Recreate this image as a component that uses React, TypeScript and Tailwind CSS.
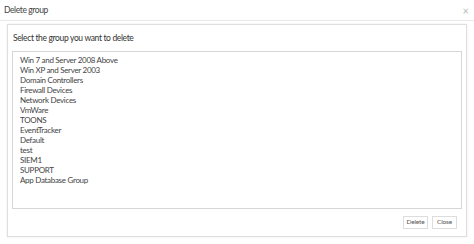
import React from "react";

const groups = [
  "Win 7 and Server 2008 Above",
  "Win XP and Server 2003",
  "Domain Controllers",
  "Firewall Devices",
  "Network Devices",
  "VmWare",
  "TOONS",
  "EventTracker",
  "Default",
  "test",
  "SIEM1",
  "SUPPORT",
  "App Database Group",
];

export default function App() {
  return (
    <div
      className="w-[474px] h-[244px] bg-white text-[#333] overflow-hidden"
      style={{ fontFamily: "Lato, 'Noto Sans', sans-serif" }}
    >
      {/* Header */}
      <div className="h-[21px] flex items-center justify-between pl-[4px] pr-[5px] border-b border-[#e8e8e8]">
        <span className="text-[8.5px] tracking-[-0.4px] leading-none text-[#444]">Delete group</span>
        <span className="text-[11px] leading-none text-[#bbb]">×</span>
      </div>

      {/* Panel */}
      <div className="mx-[7px] mt-[3px] h-[213px] border border-[#dedede] shadow-[0_0_2px_rgba(0,0,0,0.08)] flex flex-col px-[4px]">
        <div className="h-[26px] flex items-center pl-[1px] text-[8.5px] tracking-[-0.35px] text-[#333]">
          Select the group you want to delete
        </div>
        <div className="h-[158px] border border-[#d6d6d6] pl-[7px] pt-[3px] flex flex-col">
          {groups.map((g) => (
            <div key={g} className="h-[10px] text-[8px] tracking-[-0.3px] leading-[10px] text-[#444]">
              {g}
            </div>
          ))}
        </div>
        <div className="flex justify-end gap-[4px] pt-[7px] pr-[5px]">
          <button className="h-[13px] w-[25px] border border-[#ddd] bg-white text-[6.5px] tracking-[-0.2px] leading-none text-[#555]">
            Delete
          </button>
          <button className="h-[13px] w-[25px] border border-[#ddd] bg-white text-[6.5px] tracking-[-0.2px] leading-none text-[#555]">
            Close
          </button>
        </div>
      </div>
    </div>
  );
}
